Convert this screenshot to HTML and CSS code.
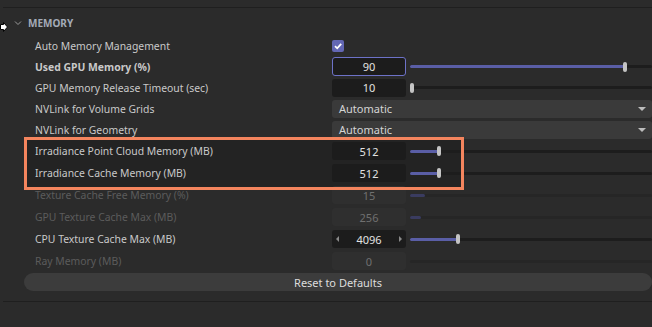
FILE: index.html
```html
<!DOCTYPE html>
<html lang="en">
<head>
    <meta charset="UTF-8">
    <title>Memory</title>
    <link rel="stylesheet" href="styles.css">
</head>
<body>
    <div class="panel">
        <svg class="cursor" width="8" height="10" viewBox="0 0 8 10">
            <path d="M0.5 2.5 L3.5 2.5 L3.5 0.5 L7.5 5 L3.5 9.5 L3.5 7.5 L0.5 7.5 Z" fill="#fff" stroke="#000" stroke-width="1"/>
        </svg>
        <div class="section-head">
            <svg class="chevron" width="8" height="6" viewBox="0 0 8 6">
                <polyline points="1,1.5 4,4.5 7,1.5" fill="none" stroke="#9a9a9a" stroke-width="1"/>
            </svg>
            <span>MEMORY</span>
        </div>

        <div class="row">
            <label>Auto Memory Management</label>
            <div class="ctrl"><span class="check"><svg width="12" height="12" viewBox="0 0 12 12"><polyline points="3,6.2 5.2,8.3 9.2,3.8" fill="none" stroke="#fff" stroke-width="1.8"/></svg></span></div>
        </div>
        <div class="row">
            <label class="bold">Used GPU Memory (%)</label>
            <div class="ctrl">
                <span class="num focus">90</span>
                <span class="slider"><span class="fill" style="width:89%"></span><span class="thumb"></span></span>
            </div>
        </div>
        <div class="row">
            <label>GPU Memory Release Timeout (sec)</label>
            <div class="ctrl">
                <span class="num">10</span>
                <span class="slider"><span class="fill" style="width:1%"></span><span class="thumb"></span></span>
            </div>
        </div>
        <div class="row">
            <label>NVLink for Volume Grids</label>
            <div class="ctrl"><span class="select">Automatic<i class="arrow"></i></span></div>
        </div>
        <div class="row">
            <label>NVLink for Geometry</label>
            <div class="ctrl"><span class="select">Automatic<i class="arrow"></i></span></div>
        </div>

        <div class="highlight">
            <div class="row tall">
                <label>Irradiance Point Cloud Memory (MB)</label>
                <div class="ctrl">
                    <span class="num">512</span>
                    <span class="slider"><span class="fill" style="width:12%"></span><span class="thumb"></span></span>
                </div>
            </div>
            <div class="row tall">
                <label>Irradiance Cache Memory (MB)</label>
                <div class="ctrl">
                    <span class="num">512</span>
                    <span class="slider"><span class="fill" style="width:12%"></span><span class="thumb"></span></span>
                </div>
            </div>
        </div>

        <div class="row tall disabled">
            <label>Texture Cache Free Memory (%)</label>
            <div class="ctrl">
                <span class="num">15</span>
                <span class="slider"><span class="fill" style="width:6%"></span></span>
            </div>
        </div>
        <div class="row tall disabled">
            <label>GPU Texture Cache Max (MB)</label>
            <div class="ctrl">
                <span class="num">256</span>
                <span class="slider"><span class="fill" style="width:4.5%"></span></span>
            </div>
        </div>
        <div class="row tall">
            <label>CPU Texture Cache Max (MB)</label>
            <div class="ctrl">
                <span class="num stepper"><i class="step left"></i>4096<i class="step right"></i></span>
                <span class="slider"><span class="fill" style="width:20%"></span><span class="thumb"></span></span>
            </div>
        </div>
        <div class="row tall disabled">
            <label>Ray Memory (MB)</label>
            <div class="ctrl">
                <span class="num">0</span>
                <span class="slider"></span>
            </div>
        </div>

        <div class="reset-row">
            <button class="reset">Reset to Defaults</button>
        </div>
    </div>
</body>
</html>
```

FILE: styles.css
```css
body, html {
    margin: 0;
    padding: 0;
    background-color: #2b2b2b;
    font-family: 'Noto Sans', 'Open Sans', sans-serif;
    font-size: 10.4px;
    color: #c9c9c9;
}
.panel {
    position: relative;
    margin-top: 7px;
    margin-left: 3px;
    border-top: 1px solid #1f1f1f;
    border-bottom: 1px solid #1f1f1f;
    padding-bottom: 10px;
}
.cursor {
    position: absolute;
    left: -3px;
    top: 14px;
}
.section-head {
    display: flex;
    align-items: center;
    height: 24px;
    padding-top: 3px;
    padding-left: 11px;
    gap: 6px;
    font-size: 10px;
    font-weight: 700;
    color: #a4abb8;
}
.row {
    display: grid;
    grid-template-columns: 297px 1fr;
    align-items: center;
    height: 21px;
    padding-left: 32px;
    position: relative;
    z-index: 1;
}
.row.tall {
    height: 22px;
}
.row label {
    white-space: nowrap;
}
.row label.bold {
    font-weight: 700;
}
.ctrl {
    display: flex;
    align-items: center;
    gap: 4px;
}
.check {
    width: 12px;
    height: 12px;
    border-radius: 2px;
    background-color: #6367b4;
    display: flex;
}
.num {
    flex: 0 0 74px;
    height: 18px;
    box-sizing: border-box;
    display: flex;
    align-items: center;
    justify-content: center;
    background-color: #1c1c1c;
    border-radius: 3px;
    color: #e2e2e2;
    font-size: 11px;
    position: relative;
}
.num.focus {
    border: 1px solid #6d72c8;
    height: 19px;
}
.step {
    position: absolute;
    top: 6px;
    width: 0;
    height: 0;
    border-top: 3px solid transparent;
    border-bottom: 3px solid transparent;
}
.step.left {
    left: 4px;
    border-right: 3px solid #8a8a8a;
}
.step.right {
    right: 4px;
    border-left: 3px solid #8a8a8a;
}
.slider {
    flex: 1;
    height: 3px;
    background-color: #1d1d1d;
    border-radius: 2px;
    position: relative;
    display: flex;
    align-items: center;
}
.fill {
    height: 3px;
    background-color: #5a5ea6;
    border-radius: 2px;
}
.thumb {
    width: 4px;
    height: 10px;
    margin-left: -2px;
    background-color: #c4c4c4;
    border-radius: 2px;
}
.select {
    flex: 1;
    height: 18px;
    display: flex;
    align-items: center;
    justify-content: space-between;
    padding: 0 6px 0 7px;
    background-color: #3a3a3a;
    border-radius: 3px;
    color: #d4d4d4;
    font-size: 11px;
}
.arrow {
    width: 0;
    height: 0;
    border-left: 4px solid transparent;
    border-right: 4px solid transparent;
    border-top: 4px solid #bdbdbd;
}
.highlight {
    position: relative;
}
.highlight::before {
    content: '';
    position: absolute;
    left: 21px;
    top: -3px;
    width: 440px;
    height: 53px;
    box-sizing: border-box;
    background-color: #232323;
    z-index: 0;
}
.highlight::after {
    content: '';
    position: absolute;
    left: 21px;
    top: -3px;
    width: 440px;
    height: 53px;
    box-sizing: border-box;
    border: 3px solid #f4855e;
    z-index: 2;
}
.disabled label {
    color: #5c5c5c;
}
.disabled .num {
    background-color: #2f2f2f;
    color: #707070;
}
.disabled .slider {
    background-color: #262626;
}
.disabled .fill {
    background-color: #3a3c60;
}
.reset-row {
    padding: 1px 0 0 21px;
}
.reset {
    display: block;
    width: 100%;
    height: 18px;
    border: none;
    border-radius: 9px;
    background-color: #3c3c3c;
    color: #dcdcdc;
    font-family: inherit;
    font-size: 11px;
    padding: 0;
}
```
